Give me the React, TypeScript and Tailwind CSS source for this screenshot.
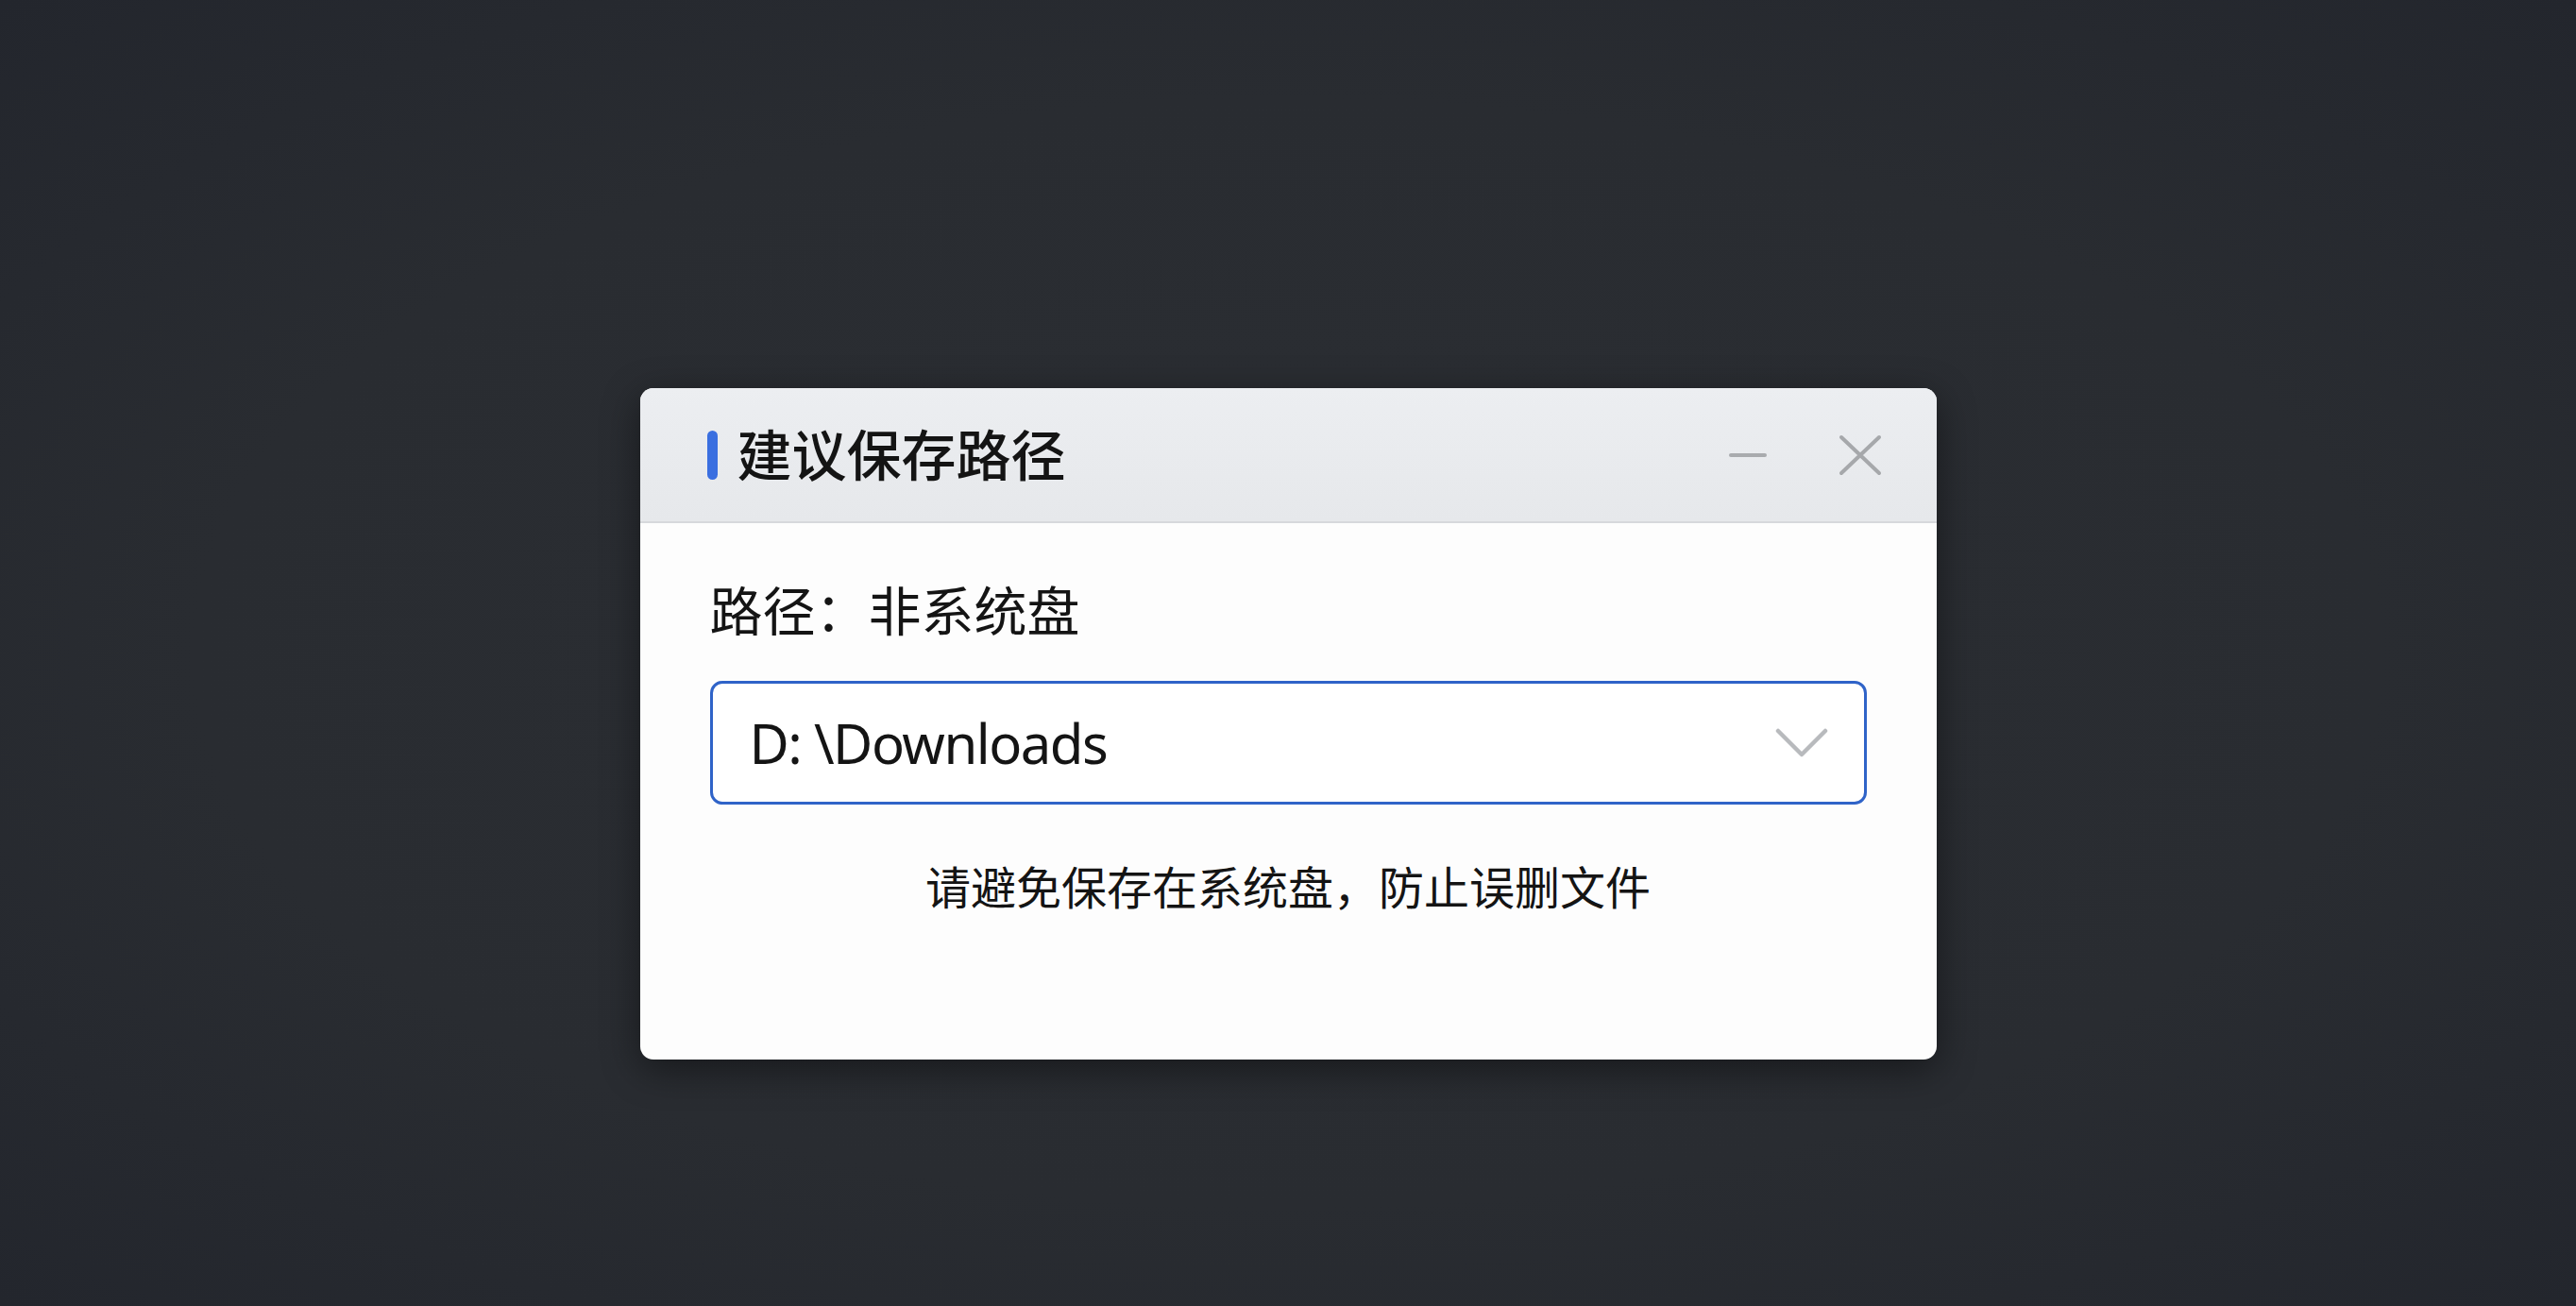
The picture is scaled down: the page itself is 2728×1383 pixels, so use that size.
import { useState } from 'react';

const FONT = '"Noto Sans", "Noto Sans CJK SC", sans-serif';

function TitleBar() {
    return (
        <div className="flex h-[143px] items-center justify-between border-b-2 border-[#d6d8dc] bg-gradient-to-b from-[#eceef1] to-[#e6e8eb] pl-[71px] pr-[58px]">
            <div className="flex items-center gap-[21px]">
                <span className="h-[52px] w-[11px] rounded-full bg-[#3a6fe0]" />
                <h1 className="text-[58px] leading-none font-medium text-[#141414]">建议保存路径</h1>
            </div>
            <div className="flex items-center gap-[76px]">
                <button className="flex h-[46px] w-[40px] items-center justify-center" title="最小化">
                    <svg width="40" height="6" viewBox="0 0 40 6">
                        <line x1="2" y1="3" x2="38" y2="3" stroke="#a9abae" strokeWidth="4" strokeLinecap="round" />
                    </svg>
                </button>
                <button className="flex h-[46px] w-[46px] items-center justify-center" title="关闭">
                    <svg width="46" height="44" viewBox="0 0 46 44">
                        <path d="M3 3 L43 41 M43 3 L3 41" stroke="#a6a8ab" strokeWidth="4" strokeLinecap="round" />
                    </svg>
                </button>
            </div>
        </div>
    );
}

export default function App() {
    const [path] = useState('D: \\Downloads');

    return (
        <div
            className="flex min-h-[1383px] w-full justify-center bg-[radial-gradient(ellipse_at_center,#2b2e33_0%,#292c31_60%,#23262d_100%)] pt-[411px]"
            style={{ fontFamily: FONT }}
        >
            <div className="flex h-[711px] w-[1373px] flex-col overflow-hidden rounded-[14px] bg-[#fdfdfd] shadow-[0_10px_40px_rgba(0,0,0,0.45)]">
                <TitleBar />
                <div className="flex flex-col px-[74px] pt-[58px]">
                    <div className="text-[56px] leading-[68px] text-[#141414]">路径：非系统盘</div>
                    <div className="mt-[41px] flex h-[131px] items-center justify-between rounded-[13px] border-[3px] border-[#2f63c8] bg-white pl-[39px] pr-[38px]">
                        <span className="text-[58px] leading-none tracking-[-1.5px] text-[#141414]">{path}</span>
                        <svg width="56" height="31" viewBox="0 0 56 31">
                            <polyline points="3,3 28,28 53,3" fill="none" stroke="#b8babd" strokeWidth="4.5" strokeLinecap="round" strokeLinejoin="round" />
                        </svg>
                    </div>
                    <p className="mt-[58px] text-center text-[48px] leading-[60px] text-[#141414]">
                        请避免保存在系统盘，防止误删文件
                    </p>
                </div>
            </div>
        </div>
    );
}
